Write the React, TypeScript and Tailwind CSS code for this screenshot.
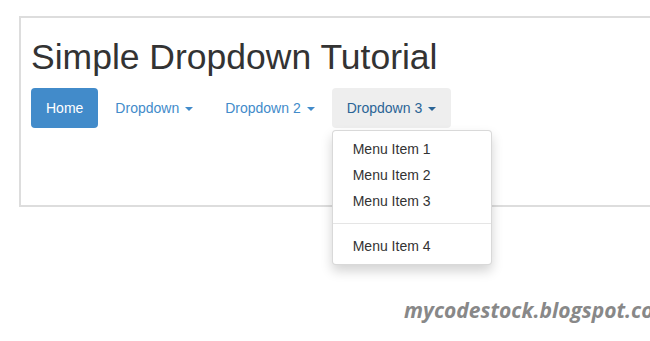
const links = ["Menu Item 1", "Menu Item 2", "Menu Item 3"];

function Caret() {
  return (
    <span className="ml-[6px] inline-block align-middle w-0 h-0 border-x-[4px] border-x-transparent border-t-[4px] border-t-current" />
  );
}

export default function App() {
  return (
    <div
      className="relative w-[650px] h-[341px] overflow-hidden bg-white text-[14px] text-[#333]"
      style={{ fontFamily: '"Liberation Sans", Arial, sans-serif' }}
    >
      <div className="ml-[19px] mt-[16px] w-[700px] h-[191px] border-2 border-[#ddd] px-[10px]">
        <h1 className="mt-[20px] mb-[10px] text-[35.5px] leading-[39.6px] font-normal">
          Simple Dropdown Tutorial
        </h1>
        <ul className="flex gap-[2px]">
          <li>
            <a className="block px-[15px] py-[10px] leading-[20px] rounded-[4px] bg-[#428bca] text-white">
              Home
            </a>
          </li>
          <li>
            <a className="block px-[15px] py-[10px] leading-[20px] rounded-[4px] text-[#428bca]">
              Dropdown
              <Caret />
            </a>
          </li>
          <li>
            <a className="block px-[15px] py-[10px] leading-[20px] rounded-[4px] text-[#428bca]">
              Dropdown 2
              <Caret />
            </a>
          </li>
          <li className="relative">
            <a className="block px-[15px] py-[10px] leading-[20px] rounded-[4px] bg-[#eee] text-[#2a6496]">
              Dropdown 3
              <Caret />
            </a>
            <ul className="absolute left-0 top-full mt-[2px] z-10 min-w-[160px] py-[5px] bg-white border border-black/15 rounded-[4px] shadow-[0_6px_12px_rgba(0,0,0,0.175)]">
              {links.map((l) => (
                <li key={l}>
                  <a className="block px-[20px] py-[3px] leading-[20px] whitespace-nowrap text-[#333]">
                    {l}
                  </a>
                </li>
              ))}
              <li className="my-[9px] h-px bg-[#e5e5e5]" />
              <li>
                <a className="block px-[20px] py-[3px] leading-[20px] whitespace-nowrap text-[#333]">
                  Menu Item 4
                </a>
              </li>
            </ul>
          </li>
        </ul>
      </div>
      <div
        className="absolute left-[404px] top-[295px] whitespace-nowrap text-[21px] font-bold italic text-[#888]"
        style={{ fontFamily: '"Open Sans", sans-serif' }}
      >
        mycodestock.blogspot.com
      </div>
    </div>
  );
}
